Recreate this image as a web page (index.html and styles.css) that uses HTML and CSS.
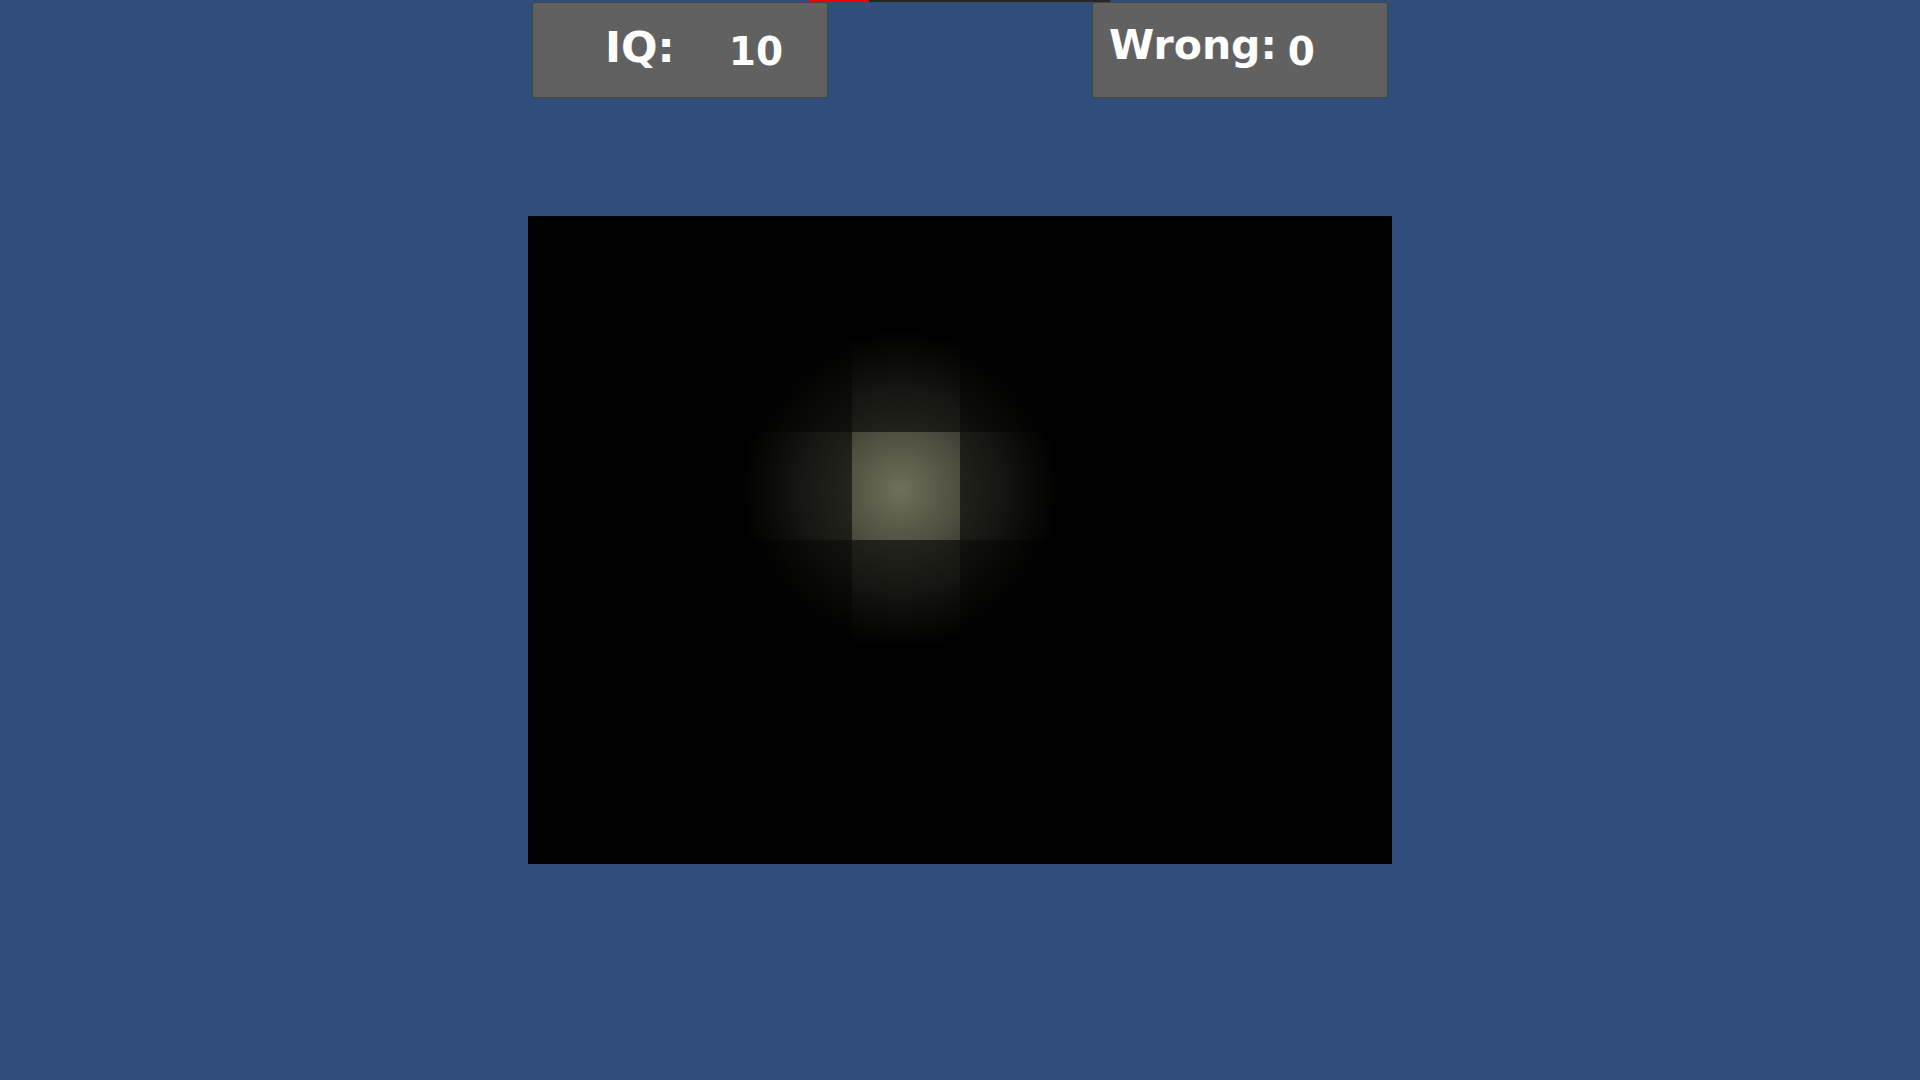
FILE: index.html
```html
<!DOCTYPE html>
<html lang="en">
<head>
<meta charset="utf-8">
<title>IQ Game</title>
<link rel="stylesheet" href="styles.css">
</head>
<body>
<div class="screen">
  <header class="hud">
    <div class="timer"><div class="timer-fill" style="width: 20%"></div></div>
    <div class="stat stat-iq">
      <span class="label label-iq">IQ:</span>
      <span class="value value-iq">10</span>
    </div>
    <div class="stat stat-wrong">
      <span class="label label-wrong">Wrong:</span>
      <span class="value value-wrong">0</span>
    </div>
  </header>
  <main class="board">
    <div class="glow"></div>
    <div class="grid">
      <div class="cell"></div><div class="cell"></div><div class="cell"></div><div class="cell"></div><div class="cell"></div><div class="cell"></div><div class="cell"></div><div class="cell"></div>
      <div class="cell"></div><div class="cell"></div><div class="cell diag"></div><div class="cell side"></div><div class="cell diag"></div><div class="cell"></div><div class="cell"></div><div class="cell"></div>
      <div class="cell"></div><div class="cell"></div><div class="cell side"></div><div class="cell lit"></div><div class="cell side"></div><div class="cell"></div><div class="cell"></div><div class="cell"></div>
      <div class="cell"></div><div class="cell"></div><div class="cell diag"></div><div class="cell side"></div><div class="cell diag"></div><div class="cell"></div><div class="cell"></div><div class="cell"></div>
      <div class="cell"></div><div class="cell"></div><div class="cell"></div><div class="cell"></div><div class="cell"></div><div class="cell"></div><div class="cell"></div><div class="cell"></div>
      <div class="cell"></div><div class="cell"></div><div class="cell"></div><div class="cell"></div><div class="cell"></div><div class="cell"></div><div class="cell"></div><div class="cell"></div>
    </div>
  </main>
</div>
</body>
</html>
```

FILE: styles.css
```css
html, body {
  margin: 0;
  padding: 0;
  width: 1920px;
  height: 1080px;
  overflow: hidden;
  background: #314d79;
}

.screen {
  width: 1920px;
  height: 1080px;
  display: flex;
  flex-direction: column;
  align-items: center;
  font-family: "DejaVu Sans", "Verdana", sans-serif;
  font-weight: bold;
  color: #ffffff;
}

.hud {
  position: relative;
  width: 1920px;
  display: flex;
  justify-content: center;
  gap: 264px;
  padding-top: 2px;
}

.timer {
  position: absolute;
  left: 809px;
  top: 0;
  width: 301px;
  height: 2px;
  background: #262626;
}

.timer-fill {
  height: 100%;
  background: #f00000;
}

.stat {
  box-sizing: border-box;
  width: 296px;
  height: 96px;
  background: #616161;
  border: 1px solid #454545;
  border-radius: 3px;
  display: flex;
  align-items: flex-start;
}

.stat-iq {
  padding-left: 72px;
}

.stat-wrong {
  padding-left: 16px;
}

.label, .value {
  display: block;
  line-height: 1;
  white-space: nowrap;
}

.label-iq {
  font-size: 43px;
  margin-top: 22.6px;
}

.value-iq {
  font-size: 39px;
  margin-top: 29px;
  margin-left: 54px;
}

.label-wrong {
  font-size: 41px;
  margin-top: 22.3px;
}

.value-wrong {
  font-size: 39px;
  margin-top: 29px;
  margin-left: 11px;
}

.board {
  position: relative;
  margin-top: 118px;
  width: 864px;
  height: 648px;
  background: #000000;
  overflow: hidden;
}

.glow {
  position: absolute;
  inset: 0;
  background: radial-gradient(circle 162px at 372px 274px,
    rgb(112, 111, 90) 0px,
    rgb(82, 81, 66) 54px,
    rgb(52, 51, 42) 100px,
    rgb(20, 20, 16) 136px,
    rgb(0, 0, 0) 162px);
}

.grid {
  position: relative;
  display: grid;
  grid-template-columns: repeat(8, 108px);
  grid-template-rows: repeat(6, 108px);
}

.cell {
  background: #000000;
}

.cell.lit {
  background: transparent;
}

.cell.side {
  background: rgba(0, 0, 0, 0.57);
}

.cell.diag {
  background: rgba(0, 0, 0, 0.74);
}
```
